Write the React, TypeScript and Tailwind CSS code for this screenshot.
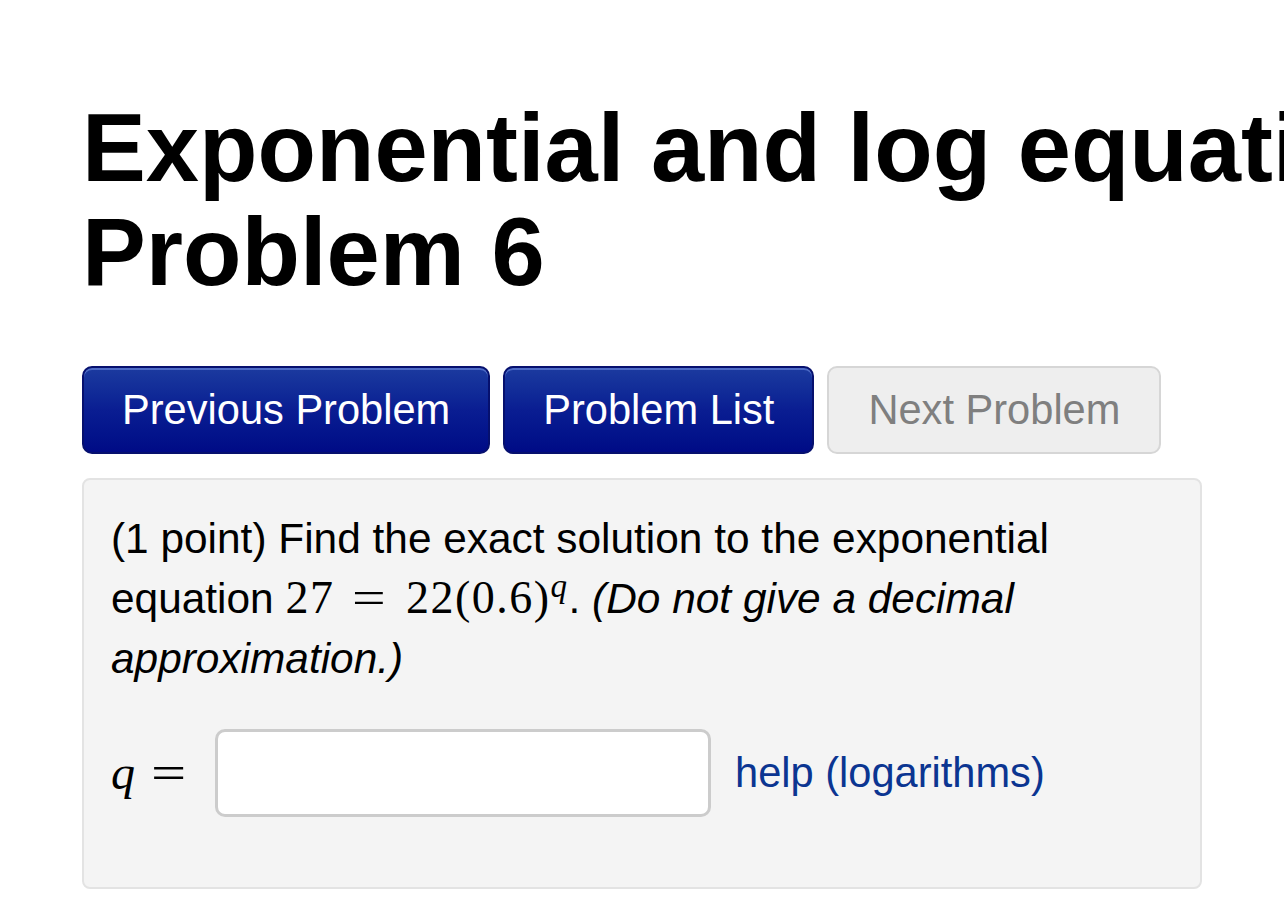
const sans = "font-['Liberation_Sans','Helvetica_Neue',Arial,sans-serif]";
const serif = "font-['Liberation_Serif','Times_New_Roman',serif]";

const NavButton = ({
  label,
  disabled = false,
}: {
  label: string;
  disabled?: boolean;
}) => {
  if (disabled) {
    return (
      <button
        disabled
        className="flex h-[88px] items-center rounded-[10px] border-2 border-[#d6d6d6] bg-[#eeeeee] px-[39px] text-[41.6px] text-[#7f7f7f]"
      >
        {label}
      </button>
    );
  }
  return (
    <button className="flex h-[88px] items-center rounded-[10px] border-2 border-[#06106e] bg-gradient-to-b from-[#1c3a9f] via-[#0a1d92] to-[#000a86] px-[38px] text-[41.6px] text-white shadow-[inset_0_2px_0_rgba(120,150,230,0.55)]">
      {label}
    </button>
  );
};

const Equals = ({ className = "" }: { className?: string }) => (
  <span className={`inline-block scale-x-[1.3] ${className}`}>=</span>
);

export default function App() {
  return (
    <div
      className={`min-h-screen w-full overflow-hidden bg-white pl-[82px] pt-[96px] text-black ${sans}`}
    >
      <h1 className="whitespace-nowrap text-[95.7px] font-bold leading-[104px]">
        Exponential and log equations:
        <br />
        Problem 6
      </h1>

      <div className="mt-[62px] flex gap-[13px]">
        <NavButton label="Previous Problem" />
        <NavButton label="Problem List" />
        <NavButton label="Next Problem" disabled />
      </div>

      <div className="mt-[24px] h-[411px] w-[1120px] rounded-[8px] border-2 border-[#e3e3e3] bg-[#f4f4f4] pl-[27px] pt-[29px]">
        <p className="w-[1000px] text-[42.4px] leading-[60px]">
          (1 point) Find the exact solution to the exponential equation{" "}
          <span className={`${serif} text-[46px] leading-none tracking-[1.5px]`}>
            27
            <Equals className="mx-[22px]" />
            22(0.6)
            <sup className="text-[33px] italic">q</sup>
          </span>
          . <em className="text-[42.4px]">(Do not give a decimal approximation.)</em>
        </p>

        <div className="mt-[40px] flex items-center">
          <span className={`${serif} w-[104px] text-[48px]`}>
            <i>q</i>
            <Equals className="ml-[20px]" />
          </span>
          <input
            type="text"
            className="h-[88px] w-[496px] rounded-[10px] border-[3px] border-[#cccccc] bg-white"
          />
          <a href="#" className="ml-[24px] text-[41.6px] text-[#0b3591]">
            help (logarithms)
          </a>
        </div>
      </div>
    </div>
  );
}
